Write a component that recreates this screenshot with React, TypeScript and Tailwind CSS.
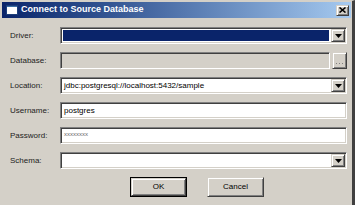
const sunken =
  'border border-t-[#808080] border-l-[#808080] border-b-white border-r-white shadow-[inset_1px_1px_0_#404040,inset_-1px_-1px_0_#d4d0c8]';
const raised =
  'border border-t-[#d4d0c8] border-l-[#d4d0c8] border-b-[#404040] border-r-[#404040] shadow-[inset_1px_1px_0_#ffffff,inset_-1px_-1px_0_#808080] bg-[#d4d0c8]';

const Arrow = () => (
  <svg width="7" height="4" viewBox="0 0 7 4">
    <path d="M0 0h7L3.5 4z" fill="#000" />
  </svg>
);

const DropButton = () => (
  <div className={`${raised} w-[14px] h-[13px] flex items-center justify-center shrink-0`}>
    <Arrow />
  </div>
);

const Label = ({ text }: { text: string }) => (
  <div className="w-[60px] pl-[10px] shrink-0 text-[8px] text-[#222]">{text}</div>
);

const Combo = ({ value, selected }: { value?: string; selected?: boolean }) => (
  <div className={`${sunken} bg-white flex-1 h-[17px] flex items-center p-[1px]`}>
    <div
      className={`flex-1 flex items-center pl-[2px] text-[8px] ${
        selected ? 'bg-[#0a246a] ml-[1px] mr-[2px] h-[11px]' : 'h-full'
      }`}
    >
      {value}
    </div>
    <DropButton />
  </div>
);

const TextField = ({ value, small }: { value?: string; small?: boolean }) => (
  <div
    className={`${sunken} bg-white flex-1 h-[17px] flex items-center pl-[3px] ${
      small ? 'text-[6px] text-[#666] items-start pt-[2px]' : 'text-[8px]'
    }`}
  >
    {value}
  </div>
);

const Row = ({ label, children }: { label: string; children: React.ReactNode }) => (
  <div className="flex items-center h-[17px]">
    <Label text={label} />
    {children}
  </div>
);

const App = () => {
  return (
    <div
      className="w-[355px] h-[205px] overflow-hidden bg-[#d4d0c8] border-t border-t-[#d4d0c8] border-r-[3px] border-r-[#404040] flex flex-col"
      style={{ fontFamily: '"Liberation Sans", Arial, sans-serif' }}
    >
      <div className="mt-[1px] ml-[2px] mr-[1px] h-[16px] flex items-center bg-gradient-to-r from-[#0a246a] to-[#a6caf0]">
        <svg width="12" height="10" viewBox="0 0 12 10" className="ml-[4px] mr-[3px] shrink-0">
          <rect x="0" y="0" width="12" height="10" fill="#ffffff" />
          <rect x="0" y="0" width="12" height="2" fill="#3a6ea5" />
          <rect x="0.5" y="0.5" width="11" height="9" fill="none" stroke="#1d3f7a" strokeWidth="1" />
        </svg>
        <span className="text-[9px] font-bold text-white">Connect to Source Database</span>
        <div className="flex-1" />
        <div className={`${raised} w-[13px] h-[11px] mr-[2px] flex items-center justify-center`}>
          <svg width="7" height="6" viewBox="0 0 7 6">
            <path d="M0.5 0.5l6 5M6.5 0.5l-6 5" stroke="#000" strokeWidth="1.6" />
          </svg>
        </div>
      </div>

      <div className="flex flex-col gap-[8px] mt-[9px] pr-[5px]">
        <Row label="Driver:">
          <Combo selected />
        </Row>
        <Row label="Database:">
          <div className={`${sunken} bg-[#d4d0c8] flex-1 h-[17px]`} />
          <div className={`${raised} w-[15px] h-[17px] ml-[2px] flex items-end justify-center pb-[4px] shrink-0`}>
            <svg width="7" height="1" viewBox="0 0 7 1">
              <rect x="0" y="0" width="1" height="1" fill="#808080" />
              <rect x="3" y="0" width="1" height="1" fill="#808080" />
              <rect x="6" y="0" width="1" height="1" fill="#808080" />
            </svg>
          </div>
        </Row>
        <Row label="Location:">
          <Combo value="jdbc:postgresql://localhost:5432/sample" />
        </Row>
        <Row label="Username:">
          <TextField value="postgres" />
        </Row>
        <Row label="Password:">
          <TextField value="xxxxxxxx" small />
        </Row>
        <Row label="Schema:">
          <Combo />
        </Row>
      </div>

      <div className="flex gap-[20px] mt-[8px] ml-[130px]">
        <button className="w-[57px] h-[20px] border border-black p-0 bg-[#d4d0c8] flex">
          <div className={`${raised} flex-1 flex items-center justify-center text-[8px]`}>OK</div>
        </button>
        <button className={`${raised} w-[57px] h-[20px] flex items-center justify-center text-[8px]`}>
          Cancel
        </button>
      </div>
    </div>
  );
};

export default App;
